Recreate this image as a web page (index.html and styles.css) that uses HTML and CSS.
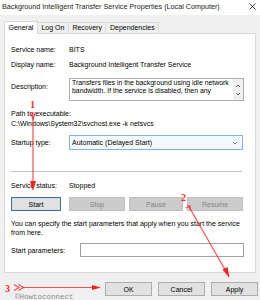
FILE: index.html
```html
<!DOCTYPE html>
<html lang="en">
<head>
  <meta charset="UTF-8" />
  <title>Background Intelligent Transfer Service Properties</title>
  <link rel="stylesheet" href="styles.css">
</head>
<body>
  <div class="dialog">

    <div class="titlebar">
      <span class="title">Background Intelligent Transfer Service Properties (Local Computer)</span>
      <svg class="close" width="7" height="7" viewBox="0 0 7 7">
        <path d="M0.5 0.5 L6.5 6.5 M6.5 0.5 L0.5 6.5" stroke="#111" stroke-width="0.8" fill="none" />
      </svg>
    </div>

    <div class="tabs">
      <div class="tab active">General</div>
      <div class="tab">Log On</div>
      <div class="tab">Recovery</div>
      <div class="tab">Dependencies</div>
    </div>

    <div class="page">
      <div class="row row-name">
        <span class="label">Service name:</span>
        <span>BITS</span>
      </div>
      <div class="row row-display">
        <span class="label">Display name:</span>
        <span>Background Intelligent Transfer Service</span>
      </div>
      <div class="row row-desc">
        <span class="label">Description:</span>
        <div class="desc">
          <div class="desc-text">Transfers files in the background using idle network<br>bandwidth. If the service is disabled, then any</div>
          <div class="scroll">
            <svg width="6" height="4" viewBox="0 0 6 4"><path d="M1 3 L3 1 L5 3" stroke="#555" stroke-width="0.8" fill="none" /></svg>
            <svg width="6" height="4" viewBox="0 0 6 4"><path d="M1 1 L3 3 L5 1" stroke="#555" stroke-width="0.8" fill="none" /></svg>
          </div>
        </div>
      </div>
      <div class="path">
        Path to executable:<br>
        C:\Windows\System32\svchost.exe -k netsvcs
      </div>
      <div class="row row-startup">
        <span class="label">Startup type:</span>
        <div class="select">
          <span>Automatic (Delayed Start)</span>
          <svg width="6" height="4" viewBox="0 0 6 4"><path d="M1 1 L3 3 L5 1" stroke="#555" stroke-width="0.8" fill="none" /></svg>
        </div>
      </div>
      <div class="sep"></div>
      <div class="row row-status">
        <span class="label">Service status:</span>
        <span>Stopped</span>
      </div>
      <div class="actions">
        <button class="btn btn-start">Start</button>
        <button class="btn btn-stop" disabled>Stop</button>
        <button class="btn btn-pause" disabled>Pause</button>
        <button class="btn btn-resume" disabled>Resume</button>
      </div>
      <p class="hint">You can specify the start parameters that apply when you start the service<br>from here.</p>
      <div class="row row-params">
        <span class="label label-wide">Start parameters:</span>
        <div class="field"></div>
      </div>
    </div>

    <div class="footer">
      <button class="btn">OK</button>
      <button class="btn">Cancel</button>
      <button class="btn">Apply</button>
    </div>

    <!-- red tutorial marks drawn over the dialog -->
    <svg class="marks" width="260" height="300" viewBox="0 0 260 300">
      <g class="mark">
        <text x="30" y="108" class="num">1</text>
        <path d="M33 112 L33 188" class="line" />
        <path d="M30.5 112.5 L33 119 L35.5 112.5" class="line" />
        <path d="M30 181 L33 191 L36 181 Z" class="head" />
      </g>
      <g class="mark">
        <text x="181" y="201" class="num">2</text>
        <path d="M188 205 L227 273" class="line" />
        <path d="M186 208 L190 206 L190.5 210.5" class="line" />
        <path d="M222.4 269.5 L229.5 278 L227.6 267 Z" class="head" />
      </g>
      <g class="mark">
        <text x="5" y="292" class="num">3</text>
        <path d="M14 284.5 L19 287.5 L14 290.5 M18.5 284.5 L23.5 287.5 L18.5 290.5" class="line" />
        <path d="M22 287.5 L95 287.5" class="line" />
        <path d="M92 285 L101 287.5 L92 290 Z" class="head" />
      </g>
      <text x="15" y="299" class="credit">©Howtoconnect</text>
    </svg>

  </div>
</body>
</html>
```

FILE: styles.css
```css
* {
  box-sizing: border-box;
}

body {
  margin: 0;
  font-family: "Liberation Sans", Arial, sans-serif;
  font-size: 7px;
  color: #000;
  background: #f0f0f0;
}

.dialog {
  position: relative;
  width: 260px;
  height: 300px;
  overflow: hidden;
}

.titlebar {
  height: 15px;
  background: #fff;
  display: flex;
  align-items: center;
  justify-content: space-between;
  padding: 0 4px 2px 2px;
  font-size: 7.2px;
  color: #222;
}

.tabs {
  display: flex;
  align-items: flex-end;
  height: 18px;
  padding-left: 4px;
}

.tab {
  height: 11px;
  line-height: 10px;
  padding: 0 3.5px;
  border: 1px solid #d9d9d9;
  border-bottom: none;
  margin-left: -1px;
  background: #f0f0f0;
}

.tab:first-child {
  margin-left: 0;
}

.tab.active {
  height: 13px;
  line-height: 12px;
  background: #fff;
  position: relative;
  margin-bottom: -1px;
  z-index: 1;
}

.page {
  margin: 0 4px;
  height: 240px;
  background: #fff;
  border: 1px solid #d9d9d9;
  padding: 11px 0 0 6px;
}

.row {
  display: flex;
  align-items: center;
  line-height: 9px;
}

.label {
  width: 58px;
  flex: none;
}

.label-wide {
  width: 69px;
}

.row-display {
  margin-top: 6px;
}

.row-desc {
  margin-top: 9px;
  align-items: flex-start;
}

.row-desc .label {
  padding-top: 4px;
}

.desc {
  width: 175px;
  height: 23px;
  border: 1px solid #abadb3;
  display: flex;
}

.desc-text {
  flex: 1;
  padding: 0 0 0 2px;
  font-size: 6.9px;
  line-height: 8px;
  white-space: nowrap;
  overflow: hidden;
}

.scroll {
  width: 10px;
  flex: none;
  background: #f0f0f0;
  display: flex;
  flex-direction: column;
  align-items: center;
  justify-content: space-between;
  padding: 5px 0 4px;
}

.scroll svg {
  display: block;
}

.path {
  margin-top: 8px;
  line-height: 10px;
}

.row-startup {
  margin-top: 6px;
}

.select {
  width: 174px;
  height: 15px;
  border: 1px solid #7eb4ea;
  background: #f4f9fe;
  display: flex;
  align-items: center;
  justify-content: space-between;
  padding: 0 4px 0 2px;
}

.sep {
  margin: 21px 0 0 0;
  width: 231px;
  border-top: 1px solid #bcbcbc;
  border-bottom: 1px solid #fff;
}

.row-status {
  margin-top: 8px;
}

.actions {
  display: flex;
  margin-top: 7px;
}

.btn {
  font: inherit;
  height: 14px;
  padding: 0;
  background: #e1e1e1;
  border: 1px solid #adadad;
  color: #000;
}

.btn:disabled {
  background: #cccccc;
  border-color: #bfbfbf;
  color: #838383;
}

.btn-start {
  width: 50px;
  border-color: #3f6fa6;
  box-shadow: inset 0 0 0 1px #cfdbe8;
}

.btn-stop {
  width: 56px;
  margin-left: 8px;
}

.btn-pause {
  width: 54px;
  margin-left: 4px;
}

.btn-resume {
  width: 56px;
  margin-left: 4px;
}

.hint {
  margin: 8px 0 0;
  line-height: 9px;
}

.row-params {
  margin-top: 6px;
}

.field {
  width: 164px;
  height: 14px;
  border: 1px solid #a0a0a0;
  background: #fff;
}

.footer {
  display: flex;
  justify-content: flex-end;
  gap: 6px;
  padding: 9px 2px 0 0;
}

.footer .btn {
  width: 47px;
  height: 14px;
}

.marks {
  position: absolute;
  left: 0;
  top: 0;
  pointer-events: none;
}

.marks .line {
  fill: none;
  stroke: #ff3030;
  stroke-width: 1.2;
  stroke-opacity: 0.85;
}

.marks .head {
  fill: #ff2020;
}

.marks .num {
  font-family: "Liberation Serif", serif;
  font-weight: bold;
  font-size: 10px;
  fill: #ff2a2a;
}

.marks .credit {
  font-family: "Liberation Mono", monospace;
  font-size: 7.5px;
  fill: #8a8a8a;
}
```
